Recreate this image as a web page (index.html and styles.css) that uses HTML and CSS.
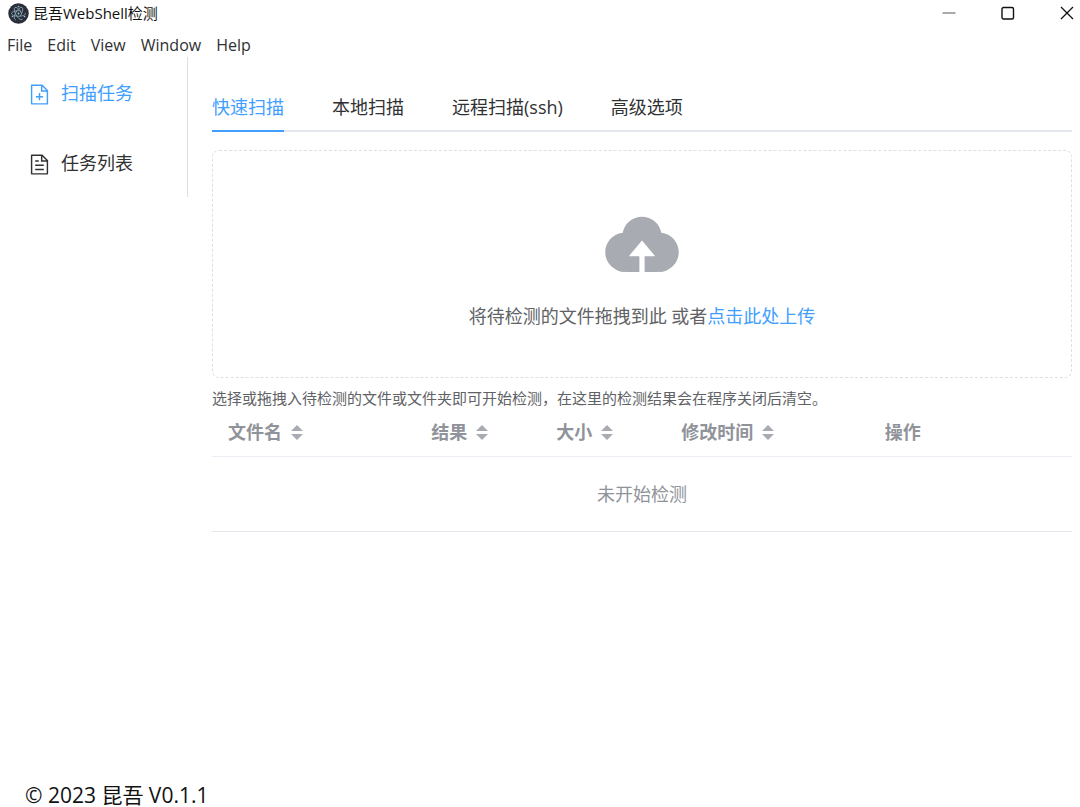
FILE: index.html
```html
<!DOCTYPE html>
<html lang="zh-CN">
<head>
    <meta charset="UTF-8">
    <meta name="viewport" content="width=device-width, initial-scale=1.0">
    <title>昆吾WebShell检测</title>
    <link rel="stylesheet" href="styles.css">
</head>
<body>
    <header class="titlebar">
        <svg class="app-logo" viewBox="0 0 42 42" aria-hidden="true">
            <circle cx="21" cy="21" r="20.5" fill="#2b2e3a"/>
            <g fill="none" stroke="#9fcbd8" stroke-width="1.5" opacity="0.85">
                <ellipse cx="21" cy="21" rx="14" ry="5.5" transform="rotate(0 21 21)" stroke-dasharray="52 10"/>
                <ellipse cx="21" cy="21" rx="14" ry="5.5" transform="rotate(60 21 21)" stroke-dasharray="52 10"/>
                <ellipse cx="21" cy="21" rx="14" ry="5.5" transform="rotate(120 21 21)" stroke-dasharray="52 10"/>
            </g>
            <g fill="#9fcbd8">
                <circle cx="21" cy="21" r="1.8"/>
                <circle cx="9" cy="27" r="1.6"/>
                <circle cx="33" cy="27" r="1.6"/>
                <circle cx="21" cy="7" r="1.6"/>
            </g>
        </svg>
        <span class="app-title">昆吾WebShell检测</span>
        <div class="window-controls">
            <button type="button" aria-label="最小化">
                <svg viewBox="0 0 14 14"><path d="M0.5 7h13" stroke="#555"/></svg>
            </button>
            <button type="button" aria-label="最大化">
                <svg viewBox="0 0 14 14"><rect x="1" y="1.5" width="11.5" height="11.5" rx="1.5" stroke="#111" stroke-width="1.4"/></svg>
            </button>
            <button type="button" aria-label="关闭">
                <svg viewBox="0 0 14 14"><path d="M1 1l12 12M13 1L1 13" stroke="#111" stroke-width="1.3"/></svg>
            </button>
        </div>
    </header>

    <nav class="menubar">
        <button type="button">File</button>
        <button type="button">Edit</button>
        <button type="button">View</button>
        <button type="button">Window</button>
        <button type="button">Help</button>
    </nav>

    <div class="container">
        <nav class="sidebar">
            <a class="nav-item active" href="#scan">
                <svg viewBox="0 0 1024 1024"><path d="M832 384H576V128H192v768h640V384zm-26.496-64L640 154.496V320h165.504zM160 64h480l256 256v608a32 32 0 0 1-32 32H160a32 32 0 0 1-32-32V96a32 32 0 0 1 32-32zm320 512V448h64v128h128v64H544v128h-64V640H352v-64h128z"/></svg>
                <span>扫描任务</span>
            </a>
            <a class="nav-item" href="#tasks">
                <svg viewBox="0 0 1024 1024"><path d="M832 384H576V128H192v768h640V384zm-26.496-64L640 154.496V320h165.504zM160 64h480l256 256v608a32 32 0 0 1-32 32H160a32 32 0 0 1-32-32V96a32 32 0 0 1 32-32zm160 448h384v64H320v-64zm0-192h160v64H320v-64zm0 384h384v64H320v-64z"/></svg>
                <span>任务列表</span>
            </a>
        </nav>

        <main class="content">
            <div class="tabs" role="tablist">
                <button type="button" class="tab active" role="tab" aria-selected="true">快速扫描</button>
                <button type="button" class="tab" role="tab" aria-selected="false">本地扫描</button>
                <button type="button" class="tab" role="tab" aria-selected="false">远程扫描(ssh)</button>
                <button type="button" class="tab" role="tab" aria-selected="false">高级选项</button>
            </div>

            <div class="upload">
                <svg class="upload-icon" viewBox="0 0 1024 1024" aria-hidden="true"><path d="M544 864V672h128L512 480 352 672h128v192H320v-1.6c-5.376.32-10.496 1.6-16 1.6A240 240 0 0 1 64 624c0-123.136 93.12-223.488 212.608-237.248A239.808 239.808 0 0 1 512 192a239.872 239.872 0 0 1 235.456 194.752c119.488 13.76 212.48 114.112 212.48 237.248a240 240 0 0 1-240 240c-5.376 0-10.56-1.28-16-1.6v1.6H544z"/></svg>
                <p class="upload-text">将待检测的文件拖拽到此 或者<a href="#upload">点击此处上传</a></p>
            </div>
            <p class="upload-tip">选择或拖拽入待检测的文件或文件夹即可开始检测，在这里的检测结果会在程序关闭后清空。</p>

            <table class="results">
                <colgroup>
                    <col>
                    <col class="col-small">
                    <col class="col-small">
                    <col>
                    <col>
                </colgroup>
                <thead>
                    <tr>
                        <th><button type="button" class="sort">文件名<span class="carets"></span></button></th>
                        <th><button type="button" class="sort">结果<span class="carets"></span></button></th>
                        <th><button type="button" class="sort">大小<span class="carets"></span></button></th>
                        <th><button type="button" class="sort">修改时间<span class="carets"></span></button></th>
                        <th>操作</th>
                    </tr>
                </thead>
                <tbody>
                    <tr>
                        <td class="empty" colspan="5">未开始检测</td>
                    </tr>
                </tbody>
            </table>
        </main>
    </div>

    <footer class="footer">© 2023 昆吾 V0.1.1</footer>
</body>
</html>
```
FILE: styles.css
```css
* {
    box-sizing: border-box;
}

body {
    display: flex;
    flex-direction: column;
    min-height: 100vh;
    margin: 0;
    background-color: #fff;
    color: #303133;
    font-family: "Open Sans", "Noto Sans CJK SC", sans-serif;
    font-size: 18px;
}

button {
    padding: 0;
    border: none;
    background: none;
    color: inherit;
    font: inherit;
    cursor: pointer;
}

a {
    color: #409eff;
    text-decoration: none;
}

p {
    margin: 0;
}

svg {
    display: block;
    fill: currentColor;
}

/* Title bar */
.titlebar {
    display: flex;
    align-items: center;
    height: 26px;
    padding-left: 8px;
    color: #111;
    font-size: 15px;
}

.app-logo {
    width: 21px;
    height: 21px;
    margin-right: 4px;
}

.app-title {
    padding-bottom: 2px;
}

.window-controls {
    display: flex;
    gap: 33px;
    margin-left: auto;
}

.window-controls button {
    display: flex;
    justify-content: center;
    align-items: center;
    width: 26px;
    height: 26px;
}

.window-controls svg {
    width: 14px;
    height: 14px;
    fill: none;
}

/* Menu bar */
.menubar {
    display: flex;
    gap: 15px;
    height: 31px;
    padding: 8px 7px 1px;
    font-size: 16px;
    line-height: 22px;
}

/* Layout */
.container {
    display: flex;
    align-items: flex-start;
}

.sidebar {
    flex: none;
    width: 188px;
    border-right: 1px solid #dcdfe6;
}

.nav-item {
    display: flex;
    align-items: center;
    gap: 10px;
    height: 70px;
    padding-left: 28px;
    padding-top: 4px;
    color: #303133;
}

.nav-item.active {
    color: #409eff;
}

.nav-item svg {
    width: 23px;
    height: 23px;
}

.nav-item span {
    padding-bottom: 4px;
}

.content {
    flex: 1;
    min-width: 0;
    padding: 28px 8px 0 24px;
}

/* Tabs */
.tabs {
    display: flex;
    gap: 48px;
    margin-bottom: 18px;
    box-shadow: inset 0 -2px #e4e7ed;
}

.tab {
    height: 47px;
    padding-bottom: 3px;
    border-bottom: 2px solid transparent;
}

.tab.active {
    border-bottom-color: #409eff;
    color: #409eff;
}

/* Upload area */
.upload {
    display: flex;
    flex-direction: column;
    align-items: center;
    padding: 50px 20px 48px;
    border: 1px dashed #dcdfe6;
    border-radius: 7px;
}

.upload-icon {
    width: 84px;
    height: 84px;
    margin-bottom: 18px;
    color: #a8abb2;
}

.upload-text {
    color: #606266;
    line-height: 26px;
}

.upload-tip {
    margin-top: 7px;
    color: #606266;
    font-size: 15px;
    line-height: 26px;
}

/* Results table */
.results {
    width: 100%;
    border-collapse: collapse;
    table-layout: fixed;
    border-bottom: 1px solid #e4e7ed;
    color: #909399;
    line-height: 26px;
}

.col-small {
    width: 125px;
}

.results th {
    padding: 8px 0 11px 16px;
    border-bottom: 1px solid #ebeef5;
    font-weight: 700;
    text-align: left;
}

.sort {
    display: flex;
    align-items: center;
    gap: 9px;
}

.carets {
    display: flex;
    flex-direction: column;
    gap: 3px;
}

.carets::before,
.carets::after {
    content: "";
    border: 6px solid transparent;
}

.carets::before {
    border-top: none;
    border-bottom-color: #a8abb2;
}

.carets::after {
    border-bottom: none;
    border-top-color: #a8abb2;
}

.results .empty {
    padding: 24px 0;
    text-align: center;
}

/* Footer */
.footer {
    margin-top: auto;
    padding-left: 25px;
    color: #111;
    font-size: 21px;
    line-height: 24px;
}
```
